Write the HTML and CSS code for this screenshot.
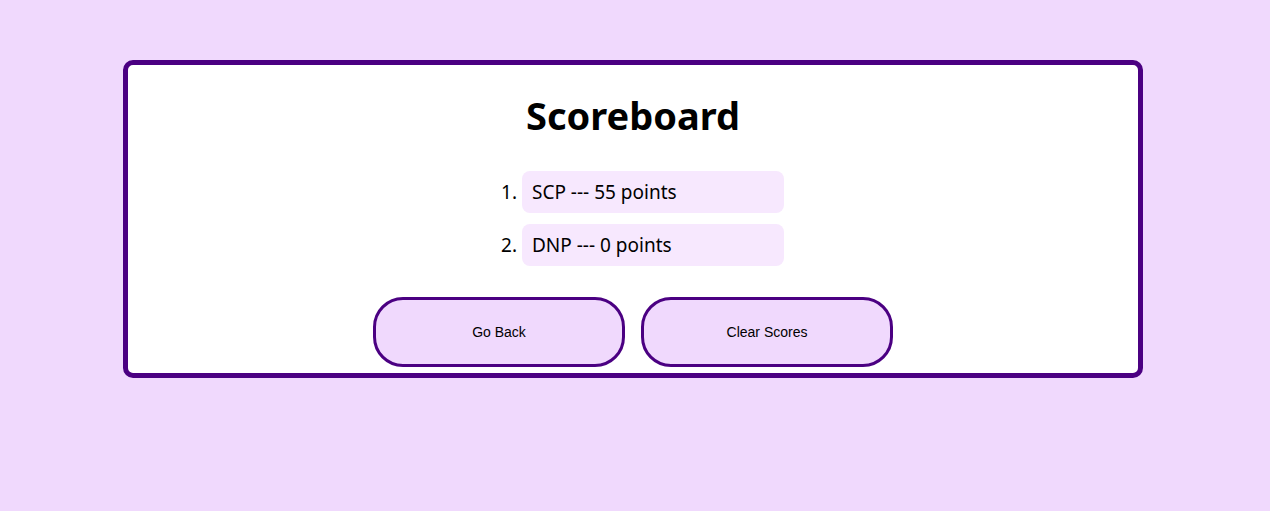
FILE: index.html
```html
<!DOCTYPE html>
<html lang="en">
<head>
<meta charset="utf-8">
<title>Scoreboard</title>
<link rel="stylesheet" href="styles.css">
</head>
<body>
  <main class="card">
    <h1 class="title">Scoreboard</h1>
    <ol class="scores">
      <li class="score">SCP --- 55 points</li>
      <li class="score">DNP --- 0 points</li>
    </ol>
    <div class="actions">
      <button class="btn" type="button">Go Back</button>
      <button class="btn" type="button">Clear Scores</button>
    </div>
  </main>
</body>
</html>
```
FILE: styles.css
```css
html, body {
  margin: 0;
  height: 100%;
}

body {
  background: #f0d9fd;
  padding: 60px 4px 0 0;
  box-sizing: border-box;
  font-family: "Noto Sans", "DejaVu Sans", sans-serif;
  color: #000;
}

.card {
  width: 1020px;
  margin: 0 auto;
  box-sizing: border-box;
  background: #fff;
  border: 5px solid #4b0082;
  border-radius: 10px;
  padding: 25px 0 6px;
  display: flex;
  flex-direction: column;
  align-items: center;
}

.title {
  margin: 0;
  font-size: 38px;
  font-weight: 700;
  line-height: 50px;
}

.scores {
  margin: 31px 0 0;
  padding-left: 40px;
  display: flex;
  flex-direction: column;
  gap: 11px;
  font-size: 19px;
}

.score {
  width: 262px;
  box-sizing: border-box;
  padding: 9px 10px;
  line-height: 24px;
  background: #f7e8fe;
  border-radius: 8px;
}

.actions {
  margin-top: 31px;
  display: flex;
  gap: 16px;
}

.btn {
  width: 252px;
  height: 70px;
  border: 3px solid #4b0082;
  border-radius: 30px;
  background: #f0d9fd;
  font-family: "Liberation Sans", Arial, sans-serif;
  font-size: 14px;
  color: #000;
}
```
